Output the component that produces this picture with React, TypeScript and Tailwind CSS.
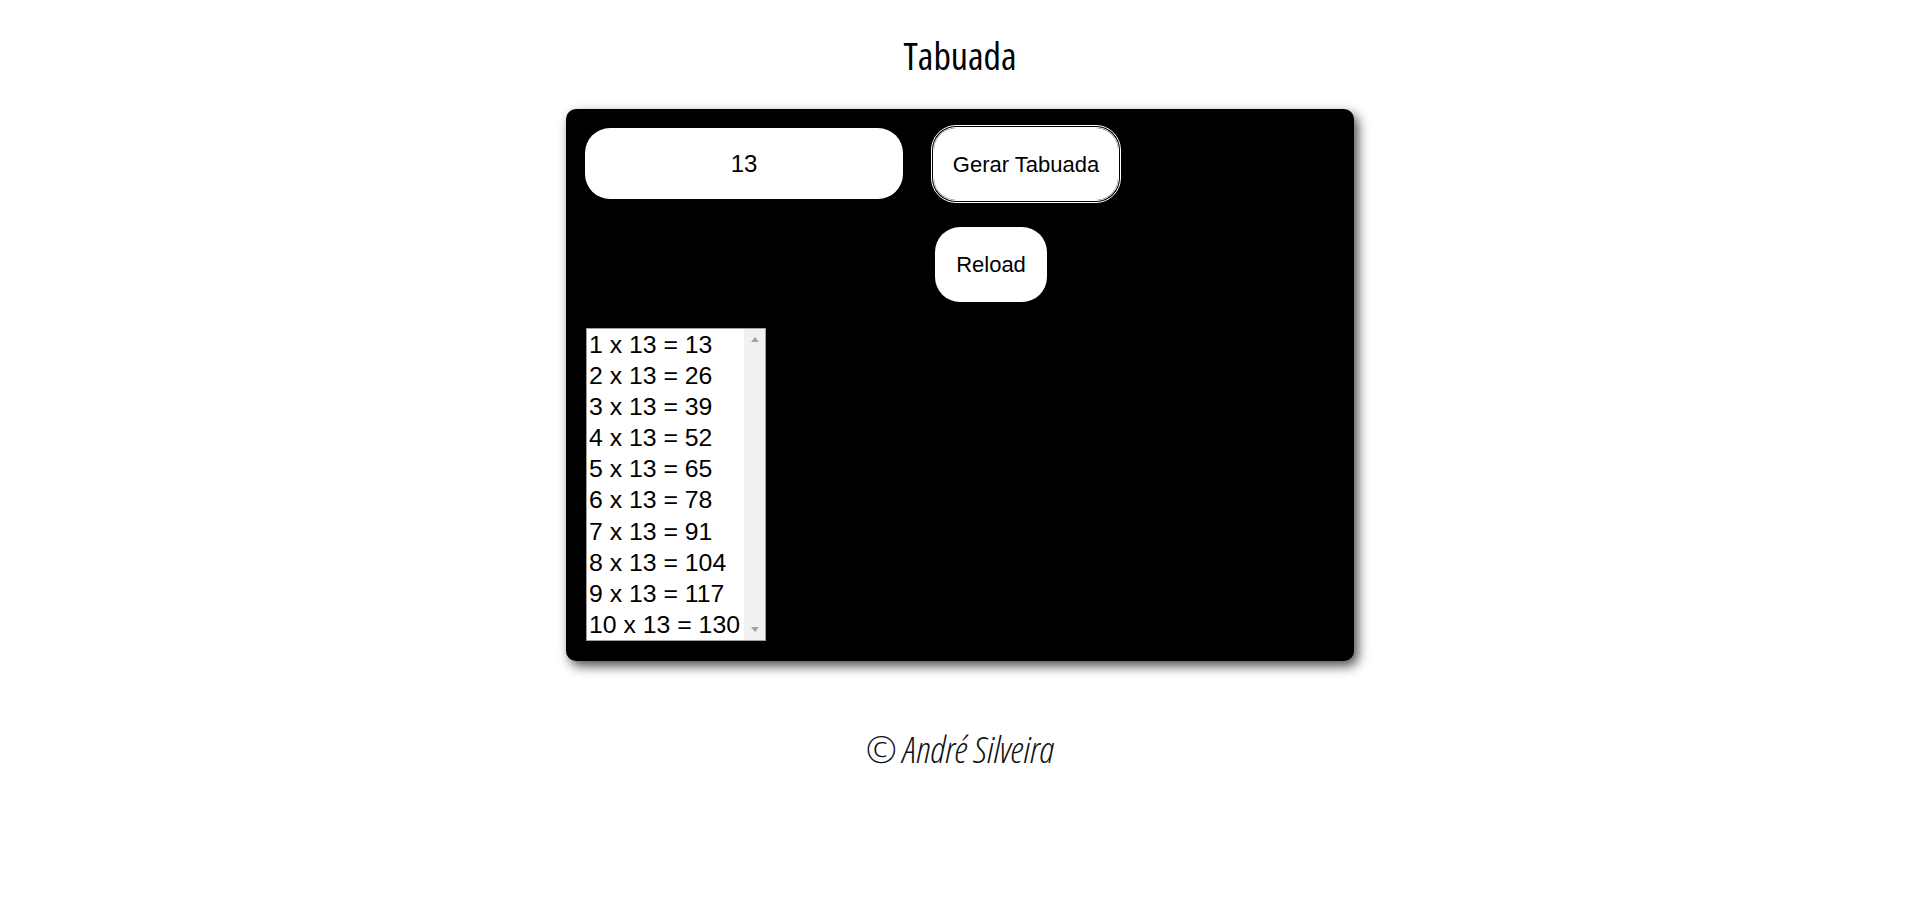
import { useState } from 'react'

const sans = "font-['Liberation_Sans',Arial,sans-serif]"
const condensed = "font-['Open_Sans',sans-serif] [font-stretch:75%]"

function ResultList({ rows }: { rows: string[] }) {
  return (
    <div className="ml-px flex h-[313px] w-[180px] border border-[#a0a0a0] bg-white">
      <div className="flex-1 overflow-hidden pl-[2px]">
        {rows.map((row) => (
          <div key={row} className="whitespace-nowrap text-[24.8px] leading-[31.1px] text-black">
            {row}
          </div>
        ))}
      </div>

      <div className="flex w-[21px] flex-col items-center justify-between bg-[#f1f1f1] py-[8px]">
        <div className="h-0 w-0 border-x-[4px] border-b-[5px] border-x-transparent border-b-[#a3a3a3]" />
        <div className="h-0 w-0 border-x-[4px] border-t-[5px] border-x-transparent border-t-[#a3a3a3]" />
      </div>
    </div>
  )
}

function App() {
  const [numero] = useState(13)
  const rows = Array.from({ length: 10 }, (_, i) => `${i + 1} x ${numero} = ${(i + 1) * numero}`)

  return (
    <div className={`flex min-h-screen flex-col items-center bg-white ${sans}`}>
      <h1 className={`pt-[27px] text-[38px] font-normal leading-normal text-black ${condensed}`}>
        Tabuada
      </h1>

      <main
        className="
          mt-[25px] flex w-[788px] flex-col
          rounded-[10px] bg-black px-[19px] pt-[16px] pb-[20px]
          shadow-[4px_5px_12px_rgba(0,0,0,0.7)]
        "
      >
        <div className="flex items-start">
          <input
            type="number"
            defaultValue={numero}
            className="
              mt-[3px] h-[71px] w-[318px] rounded-[25px]
              bg-white text-center text-[24px] text-black outline-none
              [appearance:textfield] [&::-webkit-inner-spin-button]:appearance-none
            "
          />

          <div className="ml-[28px] flex flex-col">
            <button
              className="
                h-[78px] w-[190px] rounded-[25px]
                border-[3px] border-double border-white
                bg-white bg-clip-padding text-[22px] text-black
              "
            >
              Gerar Tabuada
            </button>

            <button
              className="
                mt-[24px] ml-[4px] h-[75px] w-[112px]
                rounded-[25px] bg-white text-[22px] text-black
              "
            >
              Reload
            </button>
          </div>
        </div>

        <div className="mt-[26px]">
          <ResultList rows={rows} />
        </div>
      </main>

      <footer className={`mt-[60px] text-[37.5px] font-light italic leading-normal text-[#111] ${condensed}`}>
        © André Silveira
      </footer>
    </div>
  )
}

export default App
